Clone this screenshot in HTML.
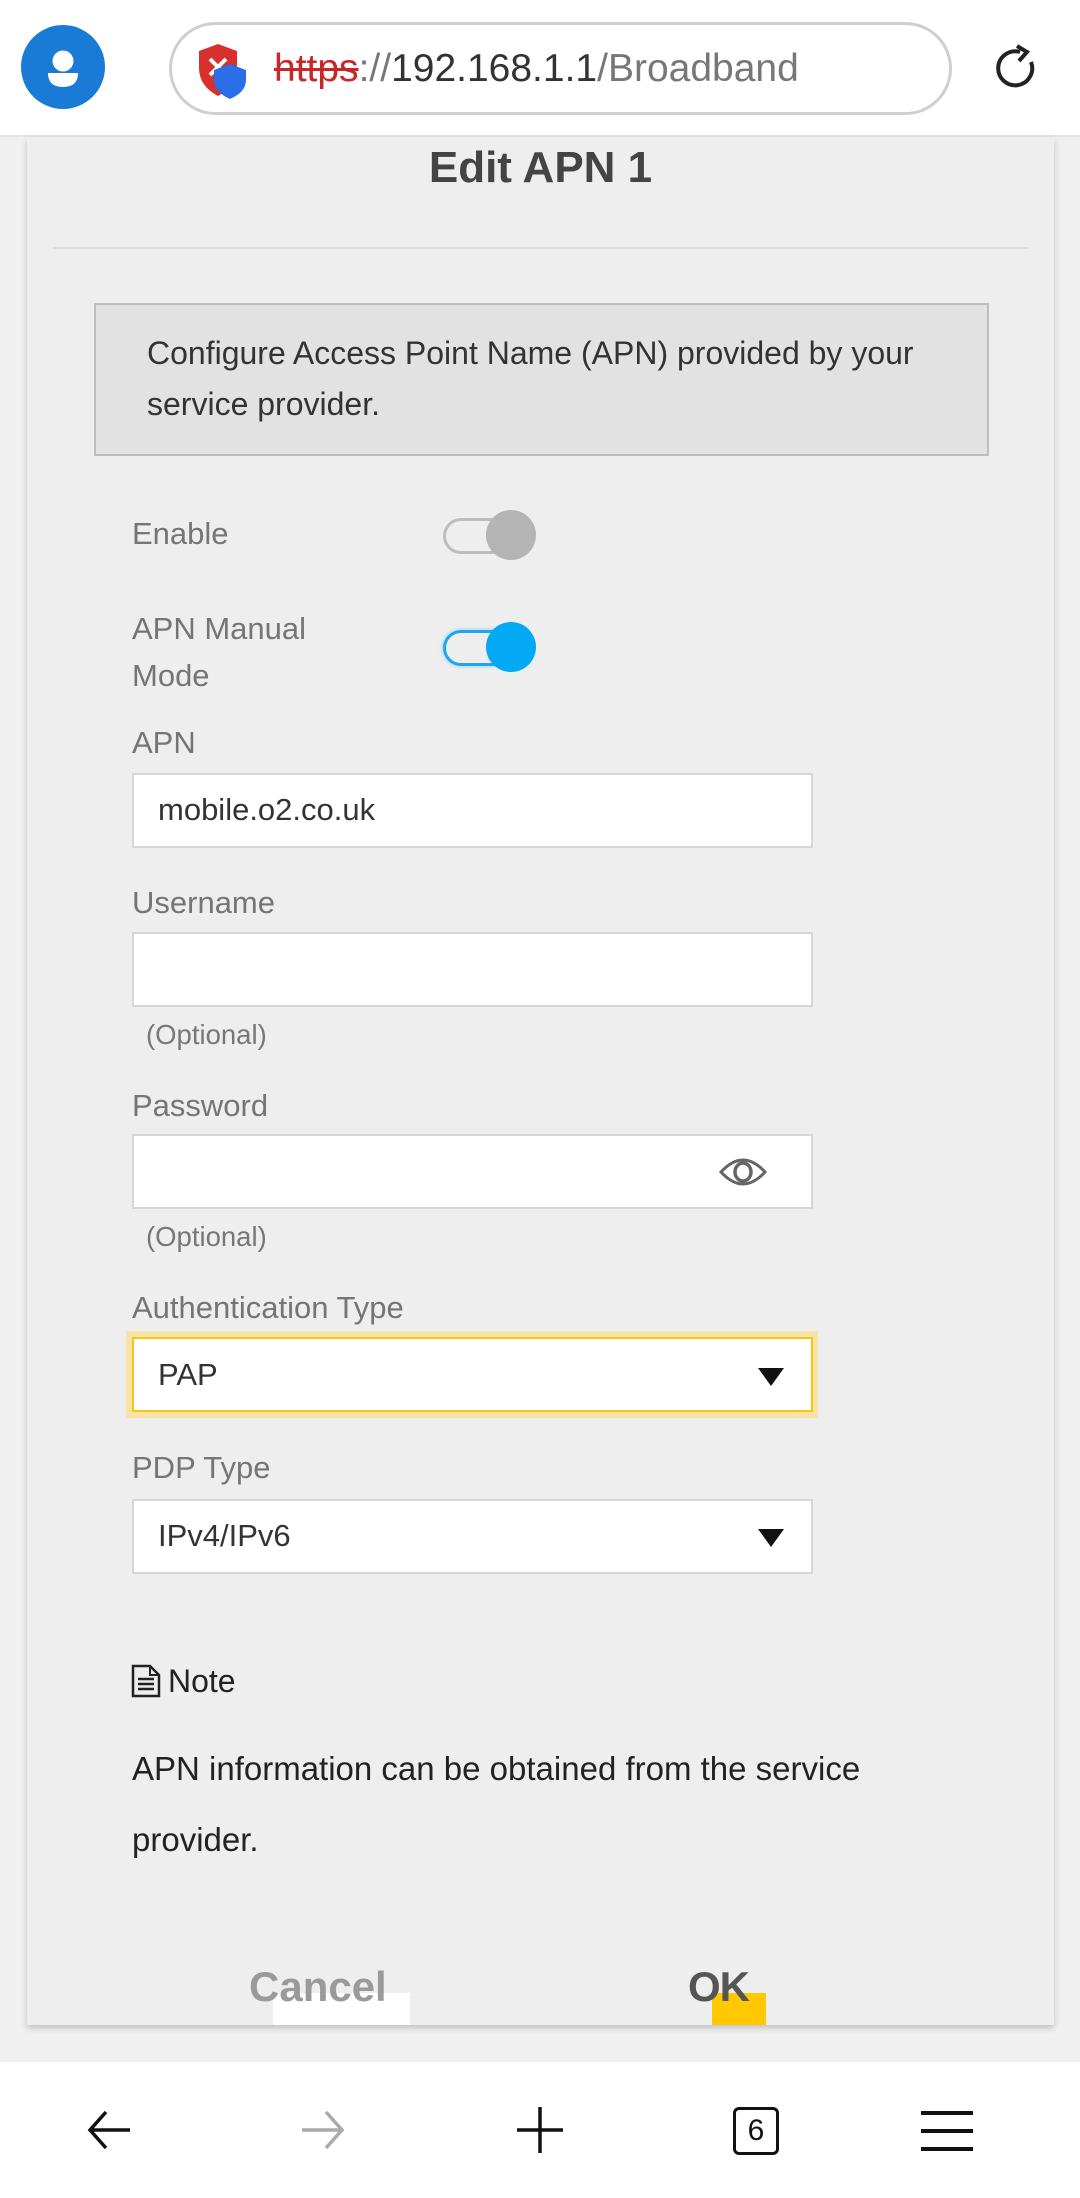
<!DOCTYPE html>
<html><head><meta charset="utf-8">
<style>
*{margin:0;padding:0;box-sizing:border-box}
body{width:1080px;height:2198px;position:relative;overflow:hidden;background:#f0f0f0;font-family:"Liberation Sans",sans-serif}
.a{position:absolute;white-space:nowrap}
.lbl{font-size:31px;color:#757575;line-height:34px}
.inp{position:absolute;left:132px;width:681px;height:75px;background:#fff;border:2px solid #d6d6d6}
.opt{font-size:27.5px;color:#777;line-height:30px}
</style></head><body>
<!-- top bar -->
<div class="a" style="left:0;top:0;width:1080px;height:137px;background:#fff;border-bottom:2px solid #e4e4e4"></div>
<svg class="a" style="left:21px;top:25px" width="84" height="84" viewBox="0 0 84 84">
<circle cx="42" cy="42" r="42" fill="#1a7bd6"/>
<circle cx="42" cy="36" r="10.5" fill="#fff"/>
<path d="M27 48 H57 Q57 62 42 62 Q27 62 27 48Z" fill="#fff"/>
</svg>
<div class="a" style="left:169px;top:22px;width:783px;height:93px;border:3px solid #cfcfcf;border-radius:47px;background:#fff"></div>
<svg class="a" style="left:196px;top:42px" width="54" height="58" viewBox="0 0 54 58">
<path d="M22 2 L41 9 V26 Q41 44 22 54 Q3 44 3 26 V9Z" fill="#d8302c"/>
<path d="M14 17 L30 33 M30 17 L14 33" stroke="#fff" stroke-width="4"/>
<path d="M34 22 L50 28 V38 Q50 50 34 57 Q18 50 18 38 V28Z" fill="#2a6ee8"/>
</svg>
<div class="a" style="left:274px;top:47px;font-size:39px;line-height:44px;color:#333"><span style="color:#c62828;text-decoration:line-through">https</span><span style="color:#777">://</span>192.168.1.1<span style="color:#777">/Broadband</span></div>
<svg class="a" style="left:990px;top:42px" width="52" height="52" viewBox="0 0 52 52">
<path d="M41 20 A17 17 0 1 1 30 10" fill="none" stroke="#222" stroke-width="4"/>
<path d="M27 4 L37 10 L29 19" fill="none" stroke="#222" stroke-width="4"/>
</svg>
<!-- card -->
<div class="a" style="left:27px;top:137px;width:1027px;height:1888px;background:#eeeeee;box-shadow:0 3px 6px rgba(0,0,0,.2)"></div>
<div class="a" style="left:27px;top:142px;width:1027px;text-align:center;font-size:44px;font-weight:bold;color:#444;line-height:52px">Edit APN 1</div>
<div class="a" style="left:53px;top:247px;width:975px;height:2px;background:#dcdcdc"></div>
<div class="a" style="left:94px;top:303px;width:895px;height:153px;background:#e2e2e2;border:2px solid #bdbdbd"></div>
<div class="a" style="left:147px;top:328px;font-size:32px;line-height:51px;color:#333">Configure Access Point Name (APN) provided by your<br>service provider.</div>

<div class="a lbl" style="left:132px;top:517px">Enable</div>
<div class="a" style="left:443px;top:518px;width:88px;height:36px;border:3px solid #bdbdbd;border-radius:18px;background:#eee"></div>
<div class="a" style="left:486px;top:510px;width:50px;height:50px;border-radius:50%;background:#b4b4b4"></div>

<div class="a lbl" style="left:132px;top:605px;line-height:47px">APN Manual<br>Mode</div>
<div class="a" style="left:443px;top:630px;width:88px;height:36px;border:3px solid #1ea7ef;border-radius:18px;background:#eee;box-shadow:0 0 4px #7fd0ff"></div>
<div class="a" style="left:486px;top:622px;width:50px;height:50px;border-radius:50%;background:#03a9f4"></div>

<div class="a lbl" style="left:132px;top:726px">APN</div>
<div class="inp" style="top:773px"></div>
<div class="a" style="left:158px;top:792px;font-size:31px;color:#333;line-height:36px">mobile.o2.co.uk</div>

<div class="a lbl" style="left:132px;top:886px">Username</div>
<div class="inp" style="top:932px"></div>
<div class="a opt" style="left:146px;top:1020px">(Optional)</div>

<div class="a lbl" style="left:132px;top:1089px">Password</div>
<div class="inp" style="top:1134px"></div>
<svg class="a" style="left:718px;top:1154px" width="50" height="36" viewBox="0 0 50 36">
<path d="M3 18 Q25 -6 47 18 Q25 42 3 18Z" fill="none" stroke="#666" stroke-width="3"/>
<ellipse cx="25" cy="18" rx="8" ry="9" fill="none" stroke="#666" stroke-width="3.5"/>
</svg>
<div class="a opt" style="left:146px;top:1222px">(Optional)</div>

<div class="a lbl" style="left:132px;top:1291px">Authentication Type</div>
<div class="a" style="left:126px;top:1331px;width:692px;height:87px;background:#f7e3a6"></div>
<div class="inp" style="top:1337px;border:2px solid #f5c518"></div>
<div class="a" style="left:158px;top:1357px;font-size:31px;color:#333;line-height:36px">PAP</div>
<svg class="a" style="left:758px;top:1368px" width="26" height="18"><path d="M0 0H26L13 18Z" fill="#111"/></svg>

<div class="a lbl" style="left:132px;top:1451px">PDP Type</div>
<div class="inp" style="top:1499px"></div>
<div class="a" style="left:158px;top:1518px;font-size:31px;color:#333;line-height:36px">IPv4/IPv6</div>
<svg class="a" style="left:758px;top:1529px" width="26" height="18"><path d="M0 0H26L13 18Z" fill="#111"/></svg>

<svg class="a" style="left:131px;top:1664px" width="30" height="34" viewBox="0 0 30 34">
<path d="M2 2 H19 L28 11 V32 H2Z" fill="none" stroke="#222" stroke-width="2.5"/>
<path d="M19 2 V11 H28" fill="none" stroke="#222" stroke-width="2"/>
<path d="M7 15H23M7 20H23M7 25H23" stroke="#222" stroke-width="2.5"/>
</svg>
<div class="a" style="left:168px;top:1663px;font-size:32px;color:#222;line-height:36px">Note</div>
<div class="a" style="left:132px;top:1733px;font-size:33px;color:#222;line-height:71px">APN information can be obtained from the service<br>provider.</div>

<div class="a" style="left:273px;top:1993px;width:137px;height:32px;background:#fff"></div>
<div class="a" style="left:712px;top:1993px;width:54px;height:32px;background:#ffc800"></div>
<div class="a" style="left:249px;top:1962px;font-size:42px;font-weight:bold;color:#9a9a9a;line-height:50px;letter-spacing:0">Cancel</div>
<div class="a" style="left:688px;top:1962px;font-size:42px;font-weight:bold;color:#555;line-height:50px;letter-spacing:-1px">OK</div>

<!-- bottom bar -->
<div class="a" style="left:0;top:2062px;width:1080px;height:136px;background:#fff"></div>
<svg class="a" style="left:86px;top:2108px" width="46" height="44" viewBox="0 0 46 44"><path d="M44 22H4M20 4L4 22L20 40" fill="none" stroke="#111" stroke-width="3.5"/></svg>
<svg class="a" style="left:300px;top:2108px" width="46" height="44" viewBox="0 0 46 44"><path d="M2 22H42M26 4L42 22L26 40" fill="none" stroke="#aaa" stroke-width="3.5"/></svg>
<svg class="a" style="left:517px;top:2107px" width="46" height="46" viewBox="0 0 46 46"><path d="M23 0V46M0 23H46" stroke="#111" stroke-width="3.5"/></svg>
<div class="a" style="left:733px;top:2107px;width:46px;height:48px;border:3.5px solid #111;border-radius:6px;font-size:30px;line-height:41px;text-align:center;color:#111">6</div>
<svg class="a" style="left:921px;top:2110px" width="52" height="42" viewBox="0 0 52 42"><path d="M0 3H52M0 21H52M0 39H52" stroke="#111" stroke-width="4"/></svg>
</body></html>
